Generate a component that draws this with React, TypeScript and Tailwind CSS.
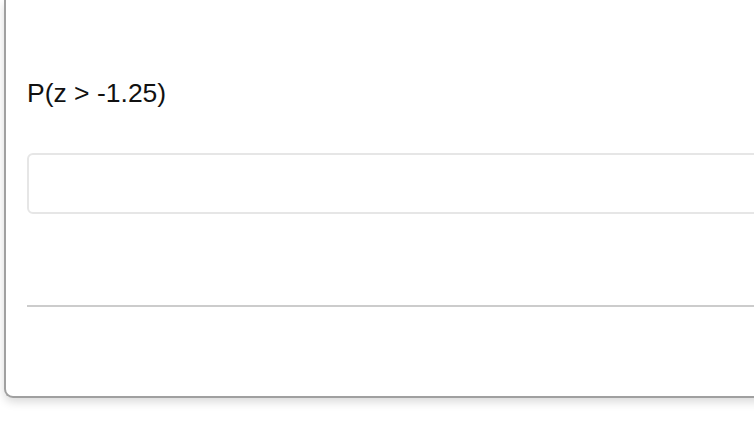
export default function App() {
  return (
    <div className="w-[754px] h-[445px] bg-white overflow-hidden" style={{ fontFamily: '"Liberation Sans", Arial, sans-serif' }}>
      <div className="ml-[4px] w-[800px] h-[398px] border-l-2 border-b-2 border-[#a0a0a0] rounded-bl-[9px] shadow-[0_4px_10px_rgba(0,0,0,0.15)] bg-white pl-[21px] pt-[78px]">
        <div className="text-[26.5px] leading-[30px] text-[#111]">P(z &gt; -1.25)</div>
        <div className="mt-[45px] h-[61px] border-2 border-[#e6e6e6] rounded-[6px] bg-white"></div>
        <div className="mt-[91px] h-[2px] bg-[#cccccc]"></div>
      </div>
    </div>
  );
}
